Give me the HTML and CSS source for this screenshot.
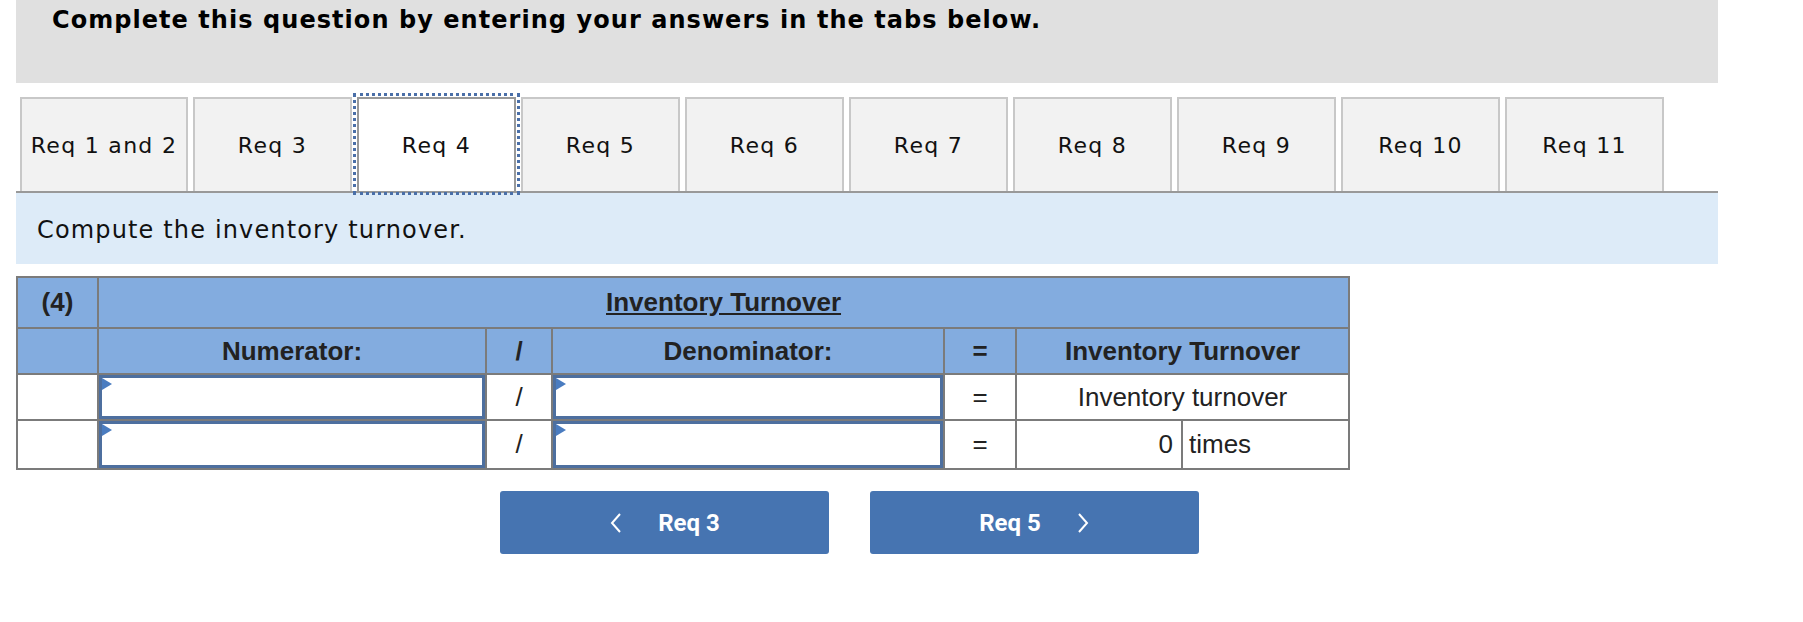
FILE: index.html
```html
<!DOCTYPE html>
<html lang="en">

<head>
    <meta charset="UTF-8" />
    <title>Inventory Turnover</title>
    <link rel="stylesheet" href="styles.css">
</head>

<body>

    <div class="page">
        <div class="intro">
            <h1>Complete this question by entering your answers in the tabs below.</h1>
        </div>

        <div class="tabs">
            <button class="tab wide">Req 1 and 2</button>
            <button class="tab">Req 3</button>
            <button class="tab active">Req 4</button>
            <button class="tab">Req 5</button>
            <button class="tab">Req 6</button>
            <button class="tab">Req 7</button>
            <button class="tab">Req 8</button>
            <button class="tab">Req 9</button>
            <button class="tab">Req 10</button>
            <button class="tab">Req 11</button>
        </div>

        <div class="prompt">Compute the inventory turnover.</div>

        <table class="grid">
            <colgroup>
                <col class="c-label">
                <col class="c-num">
                <col class="c-op">
                <col class="c-den">
                <col class="c-eq">
                <col class="c-val">
                <col class="c-unit">
            </colgroup>
            <tr class="head title-row">
                <th>(4)</th>
                <th colspan="6"><u>Inventory Turnover</u></th>
            </tr>
            <tr class="head">
                <th></th>
                <th>Numerator:</th>
                <th>/</th>
                <th>Denominator:</th>
                <th>=</th>
                <th colspan="2">Inventory Turnover</th>
            </tr>
            <tr class="row">
                <td></td>
                <td class="entry"><div class="field"><input type="text"></div></td>
                <td>/</td>
                <td class="entry"><div class="field"><input type="text"></div></td>
                <td>=</td>
                <td colspan="2">Inventory turnover</td>
            </tr>
            <tr class="row last">
                <td></td>
                <td class="entry"><div class="field"><input type="text"></div></td>
                <td>/</td>
                <td class="entry"><div class="field"><input type="text"></div></td>
                <td>=</td>
                <td class="value">0</td>
                <td class="unit">times</td>
            </tr>
        </table>

        <div class="nav">
            <button class="nav-btn">
                <svg width="14" height="22" viewBox="0 0 14 22"><path d="M11 2 L3 11 L11 20" fill="none" stroke="#fff" stroke-width="2"/></svg>
                <span>Req 3</span>
            </button>
            <button class="nav-btn">
                <span>Req 5</span>
                <svg width="14" height="22" viewBox="0 0 14 22"><path d="M3 2 L11 11 L3 20" fill="none" stroke="#fff" stroke-width="2"/></svg>
            </button>
        </div>
    </div>

</body>

</html>
```

FILE: styles.css
```css
html,
body {
    margin: 0;
    padding: 0;
    background: #fff;
    font-family: "DejaVu Sans", Verdana, sans-serif;
    color: #111;
}
.page {
    width: 1702px;
    margin-left: 16px;
}
/* top banner */
.intro {
    background: #e0e0e0;
    height: 83px;
    box-sizing: border-box;
    padding: 6px 0 0 36px;
}
.intro h1 {
    margin: 0;
    font-size: 24px;
    letter-spacing: 1.05px;
    line-height: 28px;
    font-weight: bold;
    color: #000;
}
/* tabs */
.tabs {
    display: flex;
    gap: 5px;
    margin-top: 14px;
    padding-left: 4px;
    border-bottom: 2px solid #999;
}
.tab {
    width: 159px;
    height: 94px;
    box-sizing: border-box;
    background: #f2f2f2;
    border: 2px solid #c8c8c8;
    border-bottom: none;
    font-family: "DejaVu Sans", Verdana, sans-serif;
    font-size: 22px;
    letter-spacing: 1.3px;
    color: #111;
    padding: 0;
    cursor: pointer;
}
.tab.wide { width: 168px; }
.tab.active {
    background: #fff;
    border-color: #999;
    outline: 3px dotted #4a6fa8;
    outline-offset: 1px;
    position: relative;
    z-index: 1;
}
/* prompt bar */
.prompt {
    background: #ddebf8;
    height: 71px;
    box-sizing: border-box;
    padding: 22px 0 0 21px;
    font-size: 24px;
    letter-spacing: 1.15px;
    line-height: 30px;
}
/* answer table */
.grid {
    margin-top: 12px;
    border-collapse: collapse;
    table-layout: fixed;
    width: 1332px;
    font-family: "Liberation Sans", Arial, sans-serif;
    font-size: 26px;
    color: #222;
}
.c-label { width: 81px; }
.c-num { width: 388px; }
.c-op { width: 66px; }
.c-den { width: 392px; }
.c-eq { width: 72px; }
.c-val { width: 166px; }
.c-unit { width: 167px; }
.grid th,
.grid td {
    border: 2px solid #7b7b7b;
    padding: 0;
    text-align: center;
}
.grid .head th {
    background: #83acdf;
    height: 44px;
    font-weight: bold;
}
.grid .title-row th { height: 49px; }
.grid .row td { height: 44px; }
.grid .row.last td { height: 47px; }
.grid td.value {
    text-align: right;
    padding-right: 8px;
}
.grid td.unit {
    text-align: left;
    padding-left: 6px;
}
.grid td.entry { position: relative; }
.field {
    position: absolute;
    inset: 0;
    border: 3px solid #4d6f9f;
    background: #fff;
}
.field::before {
    content: '';
    position: absolute;
    top: 0;
    left: 0;
    border-left: 10px solid #4a7cc0;
    border-top: 6px solid transparent;
    border-bottom: 6px solid transparent;
}
.field input {
    width: 100%;
    height: 100%;
    border: none;
    outline: none;
    background: transparent;
    box-sizing: border-box;
    font: inherit;
}
/* prev / next */
.nav {
    display: flex;
    gap: 41px;
    margin-top: 21px;
    padding-left: 484px;
}
.nav-btn {
    width: 329px;
    height: 63px;
    background: #4674b1;
    border: none;
    border-radius: 3px;
    color: #fff;
    font-family: Roboto, "Liberation Sans", sans-serif;
    font-weight: bold;
    font-size: 24px;
    display: flex;
    justify-content: center;
    align-items: center;
    gap: 35px;
    cursor: pointer;
}
```
